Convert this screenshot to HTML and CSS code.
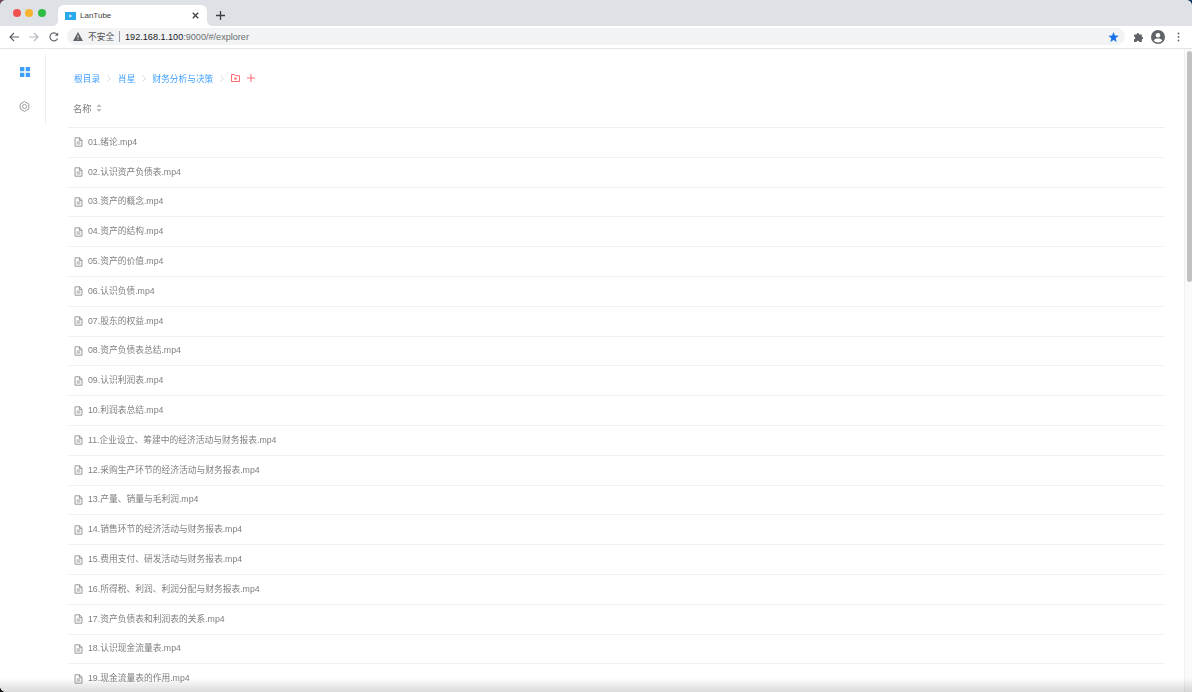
FILE: index.html
```html
<!DOCTYPE html>
<html lang="zh">
<head>
<meta charset="utf-8">
<title>LanTube</title>
<link rel="stylesheet" href="styles.css">
</head>
<body>
<svg class="defs" width="0" height="0"><defs>
<symbol id="file" viewBox="0 0 9 10"><path d="M1 .8h4.600l2.400 2.400v6H1z M5.400.8v2.600h2.600 M2.600 5h3.800 M2.600 6.900h3.800" fill="none" stroke="#8f8f8f" stroke-width=".9"/></symbol>
</defs></svg>
<div class="window">
  <header class="tabstrip">
    <div class="lights"><i class="light red"></i><i class="light yellow"></i><i class="light green"></i></div>
    <div class="tab">
      <svg class="favicon" width="11" height="8" viewBox="0 0 11 8"><rect width="11" height="8" fill="#29a8ea"/><path d="M4.300 2.200v3.600l3-1.800z" fill="#d6f0fc"/></svg>
      <span class="tab-title">LanTube</span>
      <svg class="tab-close" width="7" height="7" viewBox="0 0 7 7"><path d="M.8.800l5.400 5.400M6.200.800L.8 6.200" stroke="#3c4043" stroke-width="1.300"/></svg>
    </div>
    <svg class="newtab" width="9" height="9" viewBox="0 0 9 9"><path d="M4.500 0v9M0 4.500h9" stroke="#3c4043" stroke-width="1.300"/></svg>
  </header>
  <nav class="toolbar">
    <svg class="nav-icon" width="10" height="10" viewBox="0 0 10 10"><path d="M10 5H1.200M5 1L1 5l4 4" fill="none" stroke="#5f6368" stroke-width="1.200"/></svg>
    <svg class="nav-icon" width="10" height="10" viewBox="0 0 10 10"><path d="M0 5h8.800M5 1l4 4-4 4" fill="none" stroke="#b4b7bb" stroke-width="1.200"/></svg>
    <svg class="nav-icon" width="10" height="10" viewBox="0 0 10 10"><path d="M8.600 6.400A4 4 0 1 1 7.900 2.200" fill="none" stroke="#5f6368" stroke-width="1.200"/><path d="M9.200.400v3.400H5.800z" fill="#5f6368"/></svg>
    <div class="omnibox">
      <svg width="10" height="9" viewBox="0 0 10 9"><path d="M5 0l5 9H0z" fill="#5f6368"/><path d="M5 3.200v3M5 6.900v.9" stroke="#f1f3f4" stroke-width=".9"/></svg>
      <span class="insecure">不安全</span>
      <span class="omni-sep"></span>
      <span class="url"><b>192.168.1.100</b>:9000/#/explorer</span>
      <svg class="star" width="11" height="10" viewBox="0 0 11 10"><path d="M5.500 0l1.400 3.600 3.800.2-3 2.400 1 3.800-3.200-2.100L2.300 10l1-3.800-3-2.400 3.800-.2z" fill="#1a73e8"/></svg>
    </div>
    <svg class="ext" width="10" height="10" viewBox="0 0 10 10"><path d="M0 2.400h2.600a1.300 1.300 0 1 1 2.600 0h2.600v2.400a1.200 1.200 0 1 1 0 2.600V10H5.200a1.300 1.300 0 1 0-2.600 0H0V7.200a1.300 1.300 0 1 0 0-2.600z" fill="#5f6368"/></svg>
    <svg class="avatar" width="14" height="14" viewBox="0 0 14 14"><circle cx="7" cy="7" r="7" fill="#5f6368"/><circle cx="7" cy="5.200" r="2.300" fill="#fff"/><path d="M2.600 10.400c1-1.500 2.600-2 4.400-2s3.400.5 4.400 2a5.600 5.600 0 0 1-8.800 0z" fill="#fff"/></svg>
    <svg class="menu" width="3" height="10" viewBox="0 0 3 10"><circle cx="1.500" cy="1.500" r=".9" fill="#5f6368"/><circle cx="1.500" cy="5" r=".9" fill="#5f6368"/><circle cx="1.500" cy="8.500" r=".9" fill="#5f6368"/></svg>
  </nav>
  <div class="page">
    <aside class="sidebar">
      <svg width="10" height="10" viewBox="0 0 10 10"><path d="M0 0h4.300v4.300H0zM5.700 0H10v4.300H5.700zM0 5.700h4.300V10H0zM5.700 5.700H10V10H5.700z" fill="#3f9fff"/></svg>
      <svg class="gear" width="11" height="11" viewBox="0 0 11 11"><path d="M5.500.6l4.300 2.450v4.900L5.500 10.400 1.200 7.950v-4.900z" fill="none" stroke="#999" stroke-width="1" stroke-linejoin="round"/><circle cx="5.500" cy="5.500" r="2.100" fill="none" stroke="#999" stroke-width=".9"/></svg>
    </aside>
    <main class="main">
      <div class="crumbs">
        <a class="crumb">根目录</a><svg class="chev" width="4" height="7" viewBox="0 0 4 7"><path d="M.5.500l3 3-3 3" fill="none" stroke="#cfcfcf" stroke-width=".8"/></svg>
        <a class="crumb">肖星</a><svg class="chev chev-narrow" width="4" height="7" viewBox="0 0 4 7"><path d="M.5.500l3 3-3 3" fill="none" stroke="#cfcfcf" stroke-width=".8"/></svg>
        <a class="crumb">财务分析与决策</a><svg class="chev" width="4" height="7" viewBox="0 0 4 7"><path d="M.5.500l3 3-3 3" fill="none" stroke="#cfcfcf" stroke-width=".8"/></svg>
        <svg class="folder" width="9" height="8" viewBox="0 0 9 8"><path d="M.5.500h3l1 1.200h4v5.800h-8z" fill="none" stroke="#ff5a62" stroke-width=".9"/><path d="M3.400 3.600h2.200v2H3.400z" fill="#ff5a62"/></svg>
        <svg class="plus" width="8" height="8" viewBox="0 0 8 8"><path d="M4 0v8M0 4h8" stroke="#ff5a62" stroke-width=".9"/></svg>
      </div>
      <div class="thead">
        <span>名称</span>
        <svg width="6" height="8" viewBox="0 0 6 8"><path d="M3 0l2.600 3H.4zM3 8L.4 5h5.200z" fill="#bfbfbf"/></svg>
      </div>
      <ul class="files">
        <li class="file"><svg class="ficon"><use href="#file"/></svg>01.绪论.mp4</li>
        <li class="file"><svg class="ficon"><use href="#file"/></svg>02.认识资产负债表.mp4</li>
        <li class="file"><svg class="ficon"><use href="#file"/></svg>03.资产的概念.mp4</li>
        <li class="file"><svg class="ficon"><use href="#file"/></svg>04.资产的结构.mp4</li>
        <li class="file"><svg class="ficon"><use href="#file"/></svg>05.资产的价值.mp4</li>
        <li class="file"><svg class="ficon"><use href="#file"/></svg>06.认识负债.mp4</li>
        <li class="file"><svg class="ficon"><use href="#file"/></svg>07.股东的权益.mp4</li>
        <li class="file"><svg class="ficon"><use href="#file"/></svg>08.资产负债表总结.mp4</li>
        <li class="file"><svg class="ficon"><use href="#file"/></svg>09.认识利润表.mp4</li>
        <li class="file"><svg class="ficon"><use href="#file"/></svg>10.利润表总结.mp4</li>
        <li class="file"><svg class="ficon"><use href="#file"/></svg>11.企业设立、筹建中的经济活动与财务报表.mp4</li>
        <li class="file"><svg class="ficon"><use href="#file"/></svg>12.采购生产环节的经济活动与财务报表.mp4</li>
        <li class="file"><svg class="ficon"><use href="#file"/></svg>13.产量、销量与毛利润.mp4</li>
        <li class="file"><svg class="ficon"><use href="#file"/></svg>14.销售环节的经济活动与财务报表.mp4</li>
        <li class="file"><svg class="ficon"><use href="#file"/></svg>15.费用支付、研发活动与财务报表.mp4</li>
        <li class="file"><svg class="ficon"><use href="#file"/></svg>16.所得税、利润、利润分配与财务报表.mp4</li>
        <li class="file"><svg class="ficon"><use href="#file"/></svg>17.资产负债表和利润表的关系.mp4</li>
        <li class="file"><svg class="ficon"><use href="#file"/></svg>18.认识现金流量表.mp4</li>
        <li class="file"><svg class="ficon"><use href="#file"/></svg>19.现金流量表的作用.mp4</li>
      </ul>
    </main>
    <div class="scrolltrack"><div class="scrollthumb"></div></div>
  </div>
  <div class="bottom-shadow"></div>
  <i class="corner corner-tl"></i><i class="corner corner-tr"></i><i class="corner corner-bl"></i>
</div>
</body>
</html>
```
FILE: styles.css
```css
* { box-sizing: border-box; }
html, body { margin: 0; height: 100%; overflow: hidden; background: #fff; }
body { font-family: "Liberation Sans", "Noto Sans CJK SC", sans-serif; }
.defs { position: absolute; }
svg { display: block; flex: none; }
.window { position: relative; width: 1192px; height: 692px; overflow: hidden; display: flex; flex-direction: column; filter: blur(.45px); }

.tabstrip { height: 26px; background: #dee1e6; display: flex; align-items: flex-end; flex: none; }
.lights { display: flex; gap: 4.500px; width: 58px; padding: 0 0 9px 12.500px; align-self: flex-end; }
.light { width: 8px; height: 8px; border-radius: 50%; display: block; flex: none; }
.red { background: #f0524f; }
.yellow { background: #f5b32e; }
.green { background: #2dbd44; }
.tab { position: relative; width: 149px; height: 21px; background: #fff; border-radius: 6px 6px 0 0; display: flex; align-items: center; padding: 0 7px 0 7px; }
.tab::before, .tab::after { content: ""; position: absolute; bottom: 0; width: 5px; height: 5px; }
.tab::before { left: -5px; background: radial-gradient(circle at 0 0, #dee1e6 4.500px, #fff 5px); }
.tab::after { right: -5px; background: radial-gradient(circle at 100% 0, #dee1e6 4.500px, #fff 5px); }
.favicon { margin-right: 4px; }
.tab-title { font-size: 8px; color: #3c4043; flex: 1; }
.tab-close { margin-right: 1px; }
.newtab { margin: 0 0 6px 9px; }

.toolbar { height: 23px; background: #fff; border-bottom: 1px solid #e3e4e6; display: flex; align-items: center; padding: 0 9px 1px 9px; flex: none; }
.nav-icon { margin-right: 10px; }
.nav-icon:nth-child(3) { margin-right: 9px; }
.omnibox { width: 1058px; height: 17.500px; background: #f1f3f4; border-radius: 9px; margin-left: -1px; display: flex; align-items: center; padding: 0 6px 0 6px; font-size: 9.100px; color: #5f6368; }
.insecure { margin-left: 5px; color: #555; font-size: 8.700px; }
.omni-sep { width: 1px; height: 11px; background: #9a9da1; margin: 0 5px 0 5px; }
.url { flex: 1; color: #6b6e72; }
.url b { font-weight: 400; color: #202124; }
.ext { margin-left: 9px; }
.avatar { margin-left: 7px; }
.menu { margin-left: 12px; }

.page { flex: 1; display: flex; min-height: 0; }
.sidebar { width: 46px; height: 70px; margin-top: 5px; border-right: 1px solid #eeeeee; display: flex; flex-direction: column; align-items: center; padding: 13px 0 0 4px; gap: 24px; flex: none; }
.main { width: 1097px; margin-left: 22px; flex: none; }
.crumbs { display: flex; align-items: center; height: 14px; margin-top: 22px; padding-left: 6px; font-size: 8.700px; }
.crumb { color: #3f9fff; }
.chev { margin: 0 7px; }
.chev-narrow { margin: 0 6.500px; }
.plus { margin-left: 7px; }
.thead { display: flex; align-items: center; gap: 4px; height: 14px; margin-top: 16px; padding-left: 5px; font-size: 9.300px; color: #808080; }
.files { list-style: none; margin: 12px 0 0; padding: 0; border-top: 1px solid #eeeeee; }
.file { height: 29.800px; display: flex; align-items: center; padding: 0 0 2px 5.500px; border-bottom: 1px solid #f2f2f2; font-size: 8.750px; color: #808080; }
.ficon { width: 9px; height: 10px; margin: 2px 5.500px 0 0; }

.scrolltrack { width: 8px; margin-left: 19px; padding: 2px 2px; background: #fafafa; border-left: 1px solid #f0f0f0; flex: none; }
.scrollthumb { width: 5px; height: 231px; background: #c1c1c1; border-radius: 3px; }

.bottom-shadow { position: absolute; left: 0; right: 0; bottom: 0; height: 14px; background: linear-gradient(to bottom, rgba(0,0,0,0), rgba(0,0,0,.14)); }
.corner { position: absolute; width: 5px; height: 5px; display: block; }
.corner-tl { left: 0; top: 0; background: radial-gradient(circle at 100% 100%, transparent 4.500px, #6b4a55 5px); }
.corner-tr { right: 0; top: 0; background: radial-gradient(circle at 0 100%, transparent 4.500px, #1c3d5c 5px); }
.corner-bl { left: 0; bottom: 0; background: radial-gradient(circle at 100% 0, transparent 4.500px, #111 5px); }
```
